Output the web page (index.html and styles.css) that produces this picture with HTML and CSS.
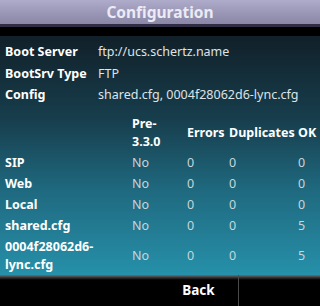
FILE: index.html
```html
<!DOCTYPE html>
<html>
<head>
<meta charset="utf-8">
<link rel="stylesheet" href="styles.css">
</head>
<body>
<div class="screen">
  <header class="titlebar"><h1 class="title">Configuration</h1></header>
  <div class="gapbar"></div>
  <main class="content">
    <div class="info">
      <div class="info-row"><span class="info-label">Boot Server</span><span class="info-value">ftp://ucs.schertz.name</span></div>
      <div class="info-row"><span class="info-label">BootSrv Type</span><span class="info-value">FTP</span></div>
      <div class="info-row"><span class="info-label">Config</span><span class="info-value">shared.cfg, 0004f28062d6-lync.cfg</span></div>
    </div>
    <table class="stats">
      <colgroup>
        <col class="c-name"><col class="c-pre"><col class="c-err"><col class="c-dup"><col class="c-ok">
      </colgroup>
      <thead>
        <tr><th></th><th>Pre-<br>3.3.0</th><th>Errors</th><th>Duplicates</th><th>OK</th></tr>
      </thead>
      <tbody>
        <tr><th>SIP</th><td>No</td><td>0</td><td>0</td><td>0</td></tr>
        <tr><th>Web</th><td>No</td><td>0</td><td>0</td><td>0</td></tr>
        <tr><th>Local</th><td>No</td><td>0</td><td>0</td><td>0</td></tr>
        <tr><th>shared.cfg</th><td>No</td><td>0</td><td>0</td><td>5</td></tr>
        <tr><th>0004f28062d6-<br>lync.cfg</th><td>No</td><td>0</td><td>0</td><td>5</td></tr>
      </tbody>
    </table>
  </main>
  <footer class="softkeys">
    <div class="key"></div>
    <div class="key"></div>
    <div class="key key-label">Back</div>
    <div class="key key-last"></div>
  </footer>
</div>
</body>
</html>
```

FILE: styles.css
```css
html, body {
  margin: 0;
  padding: 0;
  background: #000;
}
body {
  font-family: "Noto Sans", "Open Sans", sans-serif;
  width: 320px;
  height: 306px;
  overflow: hidden;
}
.screen {
  width: 320px;
  height: 306px;
  display: flex;
  flex-direction: column;
  overflow: hidden;
}
.titlebar {
  height: 24px;
  flex: none;
  background: linear-gradient(#aeacca, #9894b4 60%, #8a86a6);
  border-bottom: 3px solid #302c44;
  display: flex;
  align-items: center;
  justify-content: center;
}
.title {
  margin: 0;
  font-size: 15.5px;
  font-weight: bold;
  color: #eceaf4;
  line-height: 24px;
}
.gapbar {
  height: 9px;
  flex: none;
  background: #000;
}
.content {
  flex: 1;
  background: linear-gradient(#112029 0%, #173e4d 35%, #1f6a80 65%, #2690aa 100%);
  padding: 5px 0 0 5px;
  overflow: hidden;
  min-height: 0;
}
.info-row {
  display: flex;
  height: 21.5px;
  line-height: 21.5px;
  font-size: 12.5px;
  white-space: nowrap;
}
.info-label {
  width: 93px;
  flex: none;
  font-weight: bold;
  color: #ffffff;
}
.info-value {
  color: #dfe3e6;
}
.stats {
  margin-top: 8px;
  border-collapse: collapse;
  table-layout: fixed;
  width: 315px;
  font-size: 12.5px;
  line-height: 18px;
}
.c-name { width: 127px; }
.c-pre { width: 55px; }
.c-err { width: 42px; }
.c-dup { width: 69px; }
.c-ok { width: 22px; }
.stats th, .stats td {
  padding: 1.5px 0;
  text-align: left;
  vertical-align: middle;
  white-space: nowrap;
}
.stats th {
  font-weight: bold;
  color: #ffffff;
}
.stats td {
  color: #c9d6da;
}
.softkeys {
  height: 31px;
  flex: none;
  background: linear-gradient(#6a6e70 0px, #2a2a2a 3px, #000 5px);
  display: grid;
  grid-template-columns: 79px 80px 80px 81px;
}
.key {
  border-right: 1px solid transparent;
}
.key-label {
  font-size: 13.5px;
  font-weight: bold;
  color: #ffffff;
  line-height: 26px;
  text-align: center;
  padding-top: 2px;
  box-sizing: border-box;
  border-right: 1px solid #4a4a4a;
}
.key-last {
  border-right: none;
}
```
